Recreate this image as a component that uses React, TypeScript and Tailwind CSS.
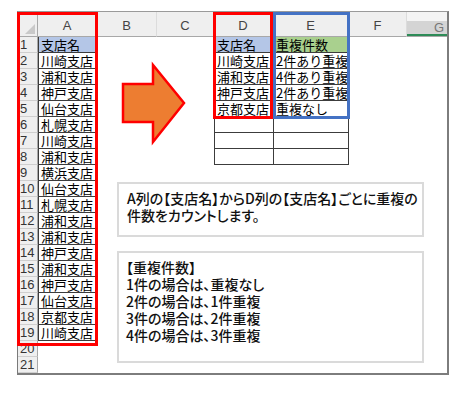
const colA = [
  '支店名', '川崎支店', '浦和支店', '神戸支店', '仙台支店', '札幌支店', '川崎支店',
  '浦和支店', '横浜支店', '仙台支店', '札幌支店', '浦和支店', '浦和支店', '神戸支店',
  '浦和支店', '神戸支店', '仙台支店', '京都支店', '川崎支店',
];
const colD = ['支店名', '川崎支店', '浦和支店', '神戸支店', '京都支店', '', '', ''];
const colE = ['重複件数', '2件あり重複', '4件あり重複', '2件あり重複', '重複なし', '', '', ''];

const cellText = "text-[13px] leading-[15px] pl-[2px] whitespace-nowrap text-black font-['Noto_Sans_CJK_JP',sans-serif]";

function HeaderRow() {
  const letters = ['A', 'B', 'C', 'D', 'E', 'F'];
  return (
    <>
      <div className="bg-[#efefef] border-r border-b border-[#a8a8a8] flex items-end justify-end pr-[2px] pb-[2px]">
        <svg width="10" height="10" viewBox="0 0 10 10">
          <path d="M10 0 L10 10 L0 10 Z" fill="#c9c9c9" />
        </svg>
      </div>
      {letters.map((l) => (
        <div
          key={l}
          className="bg-[#efefef] border-r border-b border-r-[#dcdcdc] border-b-[#a8a8a8] flex items-end justify-center pb-[2px] text-[13px] leading-[16px] text-[#444] font-['Liberation_Sans',Arial,sans-serif]"
        >
          {l}
        </div>
      ))}
      <div className="bg-[#f4f4f4] border-b border-[#a8a8a8] flex flex-col">
        <div className="mt-[9px] flex-1 bg-[#d4d4d4] border-b-2 border-[#2e8b57] flex items-end justify-end pr-[3px] text-[13px] leading-[13px] text-[#777] font-['Liberation_Sans',Arial,sans-serif]">
          G
        </div>
      </div>
    </>
  );
}

function SheetRow({ n }: { n: number }) {
  const a = n <= 19 ? colA[n - 1] : null;
  const di = n - 1;
  const inTable = n <= 8;
  return (
    <>
      <div className="bg-[#efefef] border-r border-b border-r-[#a8a8a8] border-b-[#cfcfcf] pl-[2px] text-[13px] leading-[15px] text-[#333] font-['Liberation_Sans',Arial,sans-serif]">
        {n}
      </div>
      {a !== null ? (
        <div className={n === 1 ? `bg-[#b4c6e7] border-l border-b border-[#3c3c3c] ${cellText}` : `border-l border-b border-[#3c3c3c] ${cellText}`}>
          {a}
        </div>
      ) : (
        <div />
      )}
      <div />
      <div />
      {inTable ? (
        <>
          <div className={n === 1 ? `bg-[#b4c6e7] border-l border-b border-[#3c3c3c] ${cellText}` : `border-l border-b border-[#3c3c3c] ${cellText}`}>
            {colD[di]}
          </div>
          <div className={n === 1 ? `bg-[#a9d08e] border-l border-r border-b border-[#3c3c3c] ${cellText}` : `border-l border-r border-b border-[#3c3c3c] ${cellText}`}>
            {colE[di]}
          </div>
        </>
      ) : (
        <>
          <div />
          <div />
        </>
      )}
      <div />
      <div />
    </>
  );
}

function Arrow() {
  return (
    <svg width="72" height="88" viewBox="0 0 72 88" className="absolute left-[118px] top-[60px]">
      <path
        d="M5 24 L35 24 L35 5 L66 43 L35 82 L35 62 L5 62 Z"
        fill="#ed7d31"
        stroke="#ff0000"
        strokeWidth="2.5"
        strokeLinejoin="miter"
      />
    </svg>
  );
}

const boxText = "text-[14px] leading-[17px] font-medium text-[#111] font-['Noto_Sans_CJK_JP',sans-serif] [font-feature-settings:'palt']";

export default function App() {
  const rows = Array.from({ length: 21 }, (_, i) => i + 1);
  return (
    <div className="relative w-[474px] h-[398px] bg-white overflow-hidden">
      <div className="ml-[17px] mt-[11px] w-[432px] border-t border-l border-t-[#9a9a9a] border-l-[#7a7a7a] border-r-2 border-b-2 border-r-[#7d7d7d] border-b-[#7d7d7d] bg-white">
        <div className="grid grid-cols-[20px_59px_60px_57px_59px_76px_58px_40px] grid-rows-[25px_repeat(21,16px)]">
          <HeaderRow />
          {rows.map((n) => (
            <SheetRow key={n} n={n} />
          ))}
        </div>
      </div>

      <Arrow />

      <div className="absolute left-[17px] top-[12px] w-[81px] h-[334px] border-[3px] border-[#f00]" />
      <div className="absolute left-[213px] top-[12px] w-[60px] h-[107px] border-[3px] border-[#f00]" />
      <div className="absolute left-[273px] top-[12px] w-[77px] h-[107px] border-[3px] border-[#4472c4]" />

      <div className={`absolute left-[117px] top-[182px] w-[307px] h-[55px] bg-white border-2 border-[#dadada] pl-[8px] pt-[6px] ${boxText}`}>
        <div>A列の【支店名】からD列の【支店名】ごとに重複の</div>
        <div>件数をカウントします。</div>
      </div>

      <div className={`absolute left-[117px] top-[251px] w-[307px] h-[112px] bg-white border-2 border-[#dadada] pl-[7px] pt-[6px] ${boxText}`}>
        <div>【重複件数】</div>
        <div>1件の場合は、重複なし</div>
        <div>2件の場合は、1件重複</div>
        <div>3件の場合は、2件重複</div>
        <div>4件の場合は、3件重複</div>
      </div>
    </div>
  );
}
